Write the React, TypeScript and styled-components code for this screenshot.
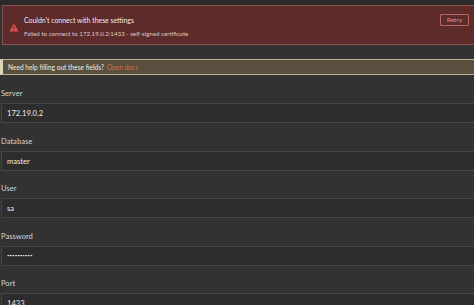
import styled, { createGlobalStyle } from 'styled-components';

const GlobalStyle = createGlobalStyle`
  html, body {
    margin: 0;
    padding: 0;
    background: #323232;
    overflow: hidden;
  }
  body {
    font-family: Lato, "Open Sans", sans-serif;
  }
`;

const fields = [
  { label: 'Server', value: '172.19.0.2' },
  { label: 'Database', value: 'master' },
  { label: 'User', value: 'sa' },
  { label: 'Password', value: '••••••••••', secret: true },
  { label: 'Port', value: '1433' },
];

export default function App() {
  return (
    <Page>
      <GlobalStyle />
      <ErrorBanner>
        <WarnIcon width="10" height="9" viewBox="0 0 10 9">
          <path d="M5 0.5 L9.6 8.5 H0.4 Z" fill="#e4504c" />
          <rect x="4.5" y="3" width="1" height="3" fill="#5c2b2a" />
          <rect x="4.5" y="6.6" width="1" height="1" fill="#5c2b2a" />
        </WarnIcon>
        <ErrorText>
          <ErrorTitle>Couldn't connect with these settings</ErrorTitle>
          <ErrorDetail>Failed to connect to 172.19.0.2:1433 - self-signed certificate</ErrorDetail>
        </ErrorText>
        <RetryButton>Retry</RetryButton>
      </ErrorBanner>

      <HelpBar>
        Need help filling out these fields?
        <DocsLink>Open docs</DocsLink>
      </HelpBar>

      <Form>
        {fields.map((f) => (
          <Field key={f.label}>
            <Label>{f.label}</Label>
            <Input $secret={f.secret}>{f.value}</Input>
          </Field>
        ))}
      </Form>
    </Page>
  );
}

const Page = styled.div`
  width: 474px;
  height: 305px;
  padding-top: 5px;
  box-sizing: border-box;
  background: linear-gradient(#2b2b2b 0, #2b2b2b 5px, #323232 5px);
  overflow: hidden;
`;

const ErrorBanner = styled.div`
  display: flex;
  align-items: center;
  height: 40px;
  box-sizing: border-box;
  margin-left: 2px;
  margin-right: -8px;
  padding: 0 12px 0 6px;
  background: #5c2b2a;
  border: 1px solid #87504d;
`;

const WarnIcon = styled.svg`
  flex: none;
  margin-top: 4px;
  margin-right: 5px;
`;

const ErrorText = styled.div`
  flex: 1;
  display: flex;
  flex-direction: column;
  gap: 5px;
  margin-top: 3px;
`;

const ErrorTitle = styled.div`
  font-size: 6.9px;
  line-height: 9px;
  color: #f4eaea;
`;

const ErrorDetail = styled.div`
  font-size: 6.2px;
  line-height: 8px;
  color: #dcc8c7;
`;

const RetryButton = styled.div`
  align-self: flex-start;
  margin-top: 8px;
  width: 29px;
  height: 12px;
  box-sizing: border-box;
  border: 1px solid #b86664;
  border-radius: 1px;
  color: #e08c8a;
  font-size: 6.5px;
  line-height: 10px;
  text-align: center;
`;

const HelpBar = styled.div`
  display: flex;
  align-items: center;
  margin-top: 14px;
  height: 16px;
  box-sizing: border-box;
  padding-left: 5px;
  background: #584f3e;
  border-top: 1px solid #b9b190;
  border-bottom: 1px solid #b9b190;
  border-left: 3px solid #ddd6b6;
  color: #efece4;
  font-size: 6.6px;
`;

const DocsLink = styled.span`
  margin-left: 3px;
  color: #de6a48;
`;

const Form = styled.div`
  display: flex;
  flex-direction: column;
  gap: 12.5px;
  margin-top: 13px;
`;

const Field = styled.div`
  display: flex;
  flex-direction: column;
  gap: 5px;
`;

const Label = styled.div`
  height: 10px;
  line-height: 10px;
  font-size: 7.6px;
  color: #d4d4d4;
  margin-left: 1px;
`;

const Input = styled.div<{ $secret?: boolean }>`
  height: 20px;
  box-sizing: border-box;
  margin-left: 1px;
  margin-right: -6px;
  padding-left: 5px;
  background: #2d2d2d;
  border: 1px solid #464646;
  color: #ececec;
  font-size: ${(p) => (p.$secret ? '4.4px' : '7.6px')};
  line-height: 18px;
`;
